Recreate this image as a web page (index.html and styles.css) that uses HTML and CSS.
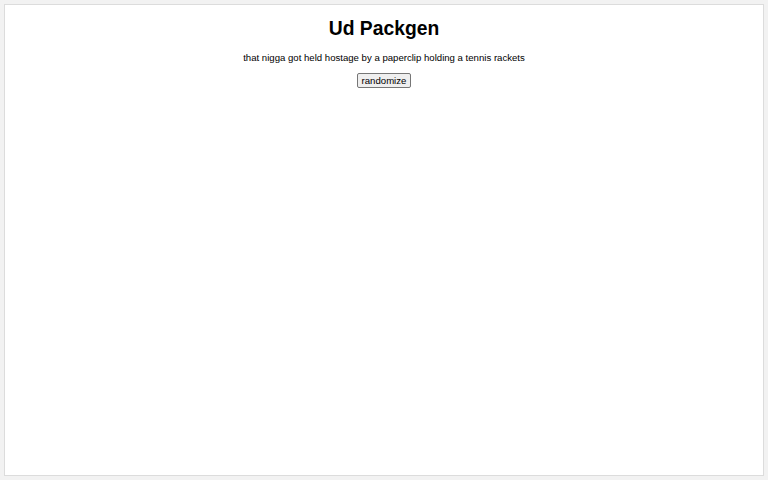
FILE: index.html
```html
<!DOCTYPE html>
<html>
<head>
<meta charset="utf-8">
<link rel="stylesheet" href="styles.css">
</head>
<body>
<div class="card">
  <h1 class="title">Ud Packgen</h1>
  <p class="pack">that nigga got held hostage by a paperclip holding a tennis rackets</p>
  <button class="btn">randomize</button>
</div>
</body>
</html>
```
FILE: styles.css
```css
html, body { margin: 0; height: 100%; }
body {
  background: #f2f2f2;
  padding: 4px;
  box-sizing: border-box;
  font-family: "Liberation Sans", Arial, sans-serif;
}
.card {
  background: #fff;
  border: 1px solid #dcdcdc;
  height: 100%;
  box-sizing: border-box;
  display: flex;
  flex-direction: column;
  align-items: center;
  padding-top: 13px;
}
.title {
  margin: 0;
  font-size: 19.3px;
  line-height: 22px;
  font-weight: bold;
  color: #000;
}
.pack {
  margin: 12px 0 0;
  font-size: 9.6px;
  line-height: 11px;
  color: #000;
}
.btn {
  margin-top: 10px;
  font-family: "Liberation Sans", Arial, sans-serif;
  font-size: 9.6px;
  line-height: 11px;
  padding: 1px 4px;
  background: #efefef;
  border: 1px solid #767676;
  border-radius: 2px;
  color: #000;
}
```
